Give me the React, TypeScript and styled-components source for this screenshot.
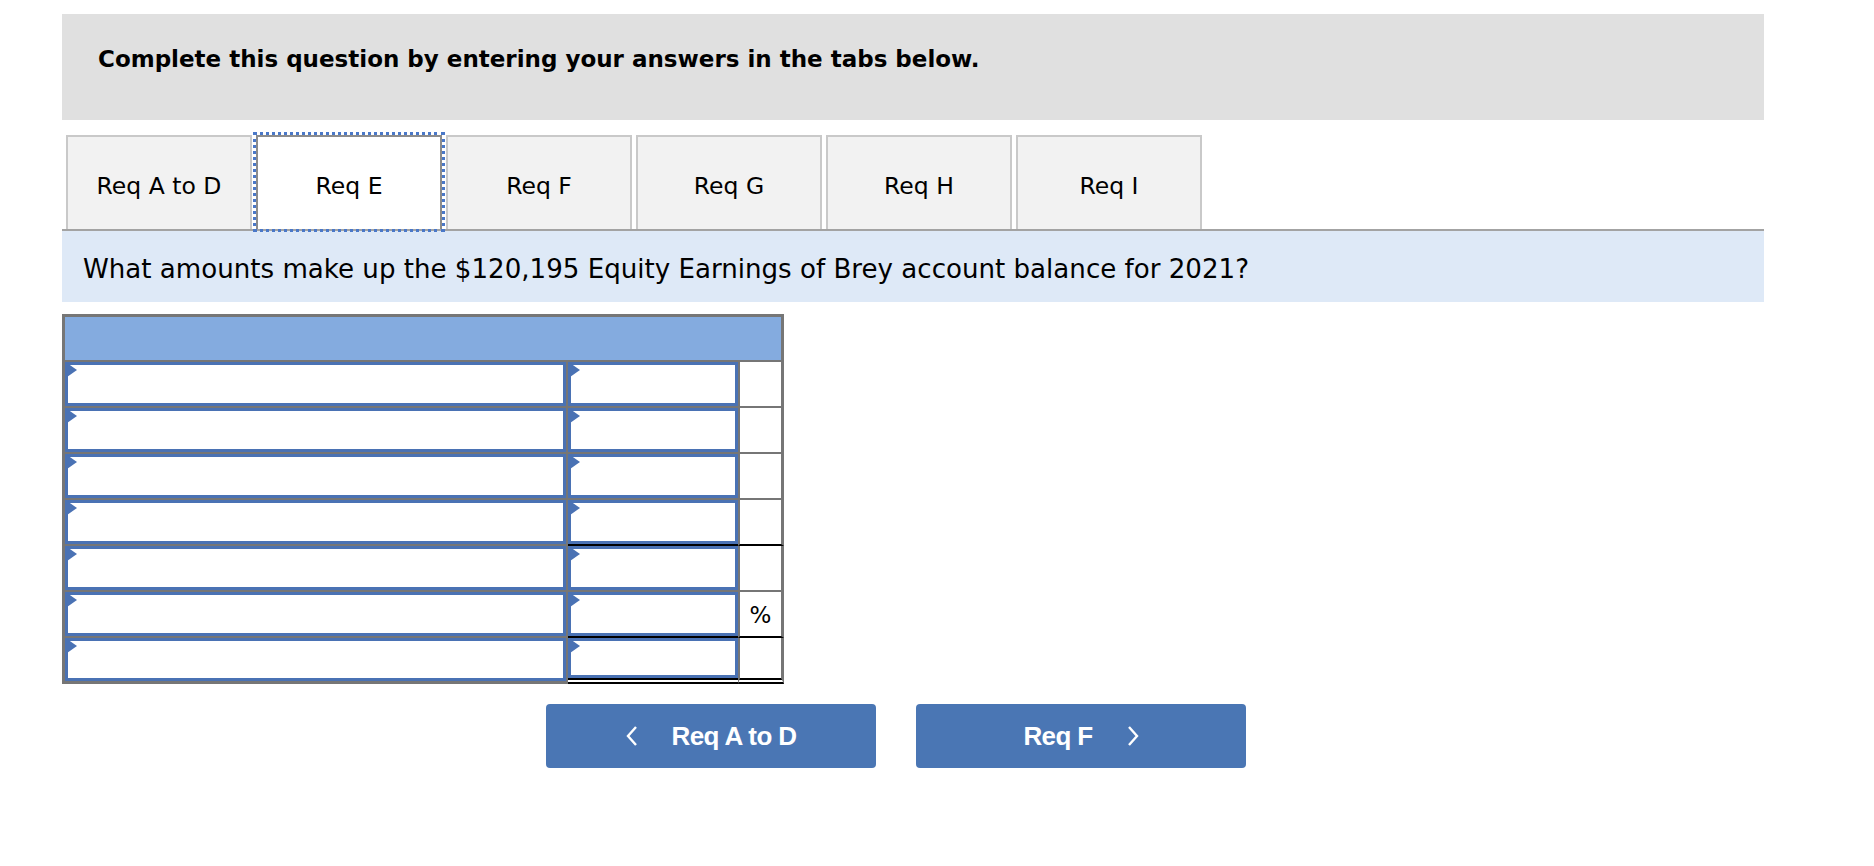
import styled, { createGlobalStyle } from "styled-components";

const GlobalStyle = createGlobalStyle`
  body {
    margin: 0;
    background: #fff;
    font-family: "DejaVu Sans", Verdana, sans-serif;
    color: #000;
  }
`;

const Page = styled.div`
  width: 1702px;
  padding: 14px 0 40px 62px;
`;

const Instructions = styled.div`
  background: #e0e0e0;
  height: 106px;
  box-sizing: border-box;
  padding: 32px 36px 0;
  font-size: 23px;
  font-weight: bold;
  line-height: normal;
`;

const TabBar = styled.div`
  display: flex;
  gap: 4px;
  margin-top: 15px;
  padding-left: 4px;
  border-bottom: 2px solid #a3a3a3;
`;

const Tab = styled.button<{ $active?: boolean }>`
  width: 186px;
  height: 94px;
  box-sizing: border-box;
  border: 2px solid ${(p) => (p.$active ? "#8c8c8c" : "#c9c9c9")};
  border-bottom: 0;
  background: ${(p) => (p.$active ? "#fff" : "#f2f2f2")};
  font-family: "DejaVu Sans", Verdana, sans-serif;
  font-size: 23.5px;
  color: #000;
  padding: 6px 0 0;
  cursor: pointer;
  outline: ${(p) => (p.$active ? "3px dotted #4a78c8" : "none")};
  outline-offset: 0;
`;

const Prompt = styled.div`
  background: #dee9f7;
  height: 71px;
  box-sizing: border-box;
  padding: 23px 21px 0;
  font-size: 26.1px;
  line-height: normal;
`;

const AnswerTable = styled.div`
  width: 722px;
  margin-top: 12px;
`;

const HeaderRow = styled.div`
  height: 48px;
  box-sizing: border-box;
  background: #84abdf;
  border: 3px solid #767676;
  border-bottom-width: 2px;
`;

const Row = styled.div`
  display: grid;
  grid-template-columns: 506px 170px 46px;
  height: 46px;
`;

type Rule = "none" | "single" | "double";

const NameCell = styled.div<{ $last?: boolean }>`
  box-sizing: border-box;
  border-left: 3px solid #767676;
  border-right: 2px solid #767676;
  border-bottom: ${(p) => (p.$last ? "3px" : "2px")} solid #767676;
  display: flex;
`;

const AmountCell = styled.div<{ $rule: Rule }>`
  box-sizing: border-box;
  display: flex;
  border-bottom: ${(p) =>
    p.$rule === "double"
      ? "6px double #000"
      : p.$rule === "single"
      ? "2px solid #000"
      : "2px solid #767676"};
`;

const UnitCell = styled(AmountCell)`
  border-left: 2px solid #767676;
  border-right: 3px solid #767676;
  align-items: center;
  justify-content: center;
  font-size: 23px;
  padding-top: 2px;
`;

const InputBox = styled.div`
  position: relative;
  flex: 1;
  border: 3px solid #4a72b4;
  background: #fff;
`;

const Field = styled.input`
  width: 100%;
  height: 100%;
  box-sizing: border-box;
  border: 0;
  padding: 0 14px;
  font-family: "DejaVu Sans", Verdana, sans-serif;
  font-size: 20px;
  background: transparent;
  outline: none;
`;

const Marker = styled.span`
  position: absolute;
  top: -2px;
  left: -1px;
  width: 0;
  height: 0;
  border-top: 7px solid transparent;
  border-bottom: 7px solid transparent;
  border-left: 10px solid #4a72b4;
`;

const NavRow = styled.div`
  display: flex;
  gap: 40px;
  margin-top: 20px;
  padding-left: 484px;
`;

const NavButton = styled.button`
  width: 330px;
  height: 64px;
  border: 0;
  border-radius: 4px;
  background: #4a76b4;
  color: #fff;
  font-family: "Liberation Sans", Arial, sans-serif;
  font-weight: bold;
  font-size: 26px;
  letter-spacing: -0.6px;
  display: flex;
  align-items: center;
  justify-content: center;
  gap: 34px;
  cursor: pointer;
`;

const Chevron = ({ dir }: { dir: "left" | "right" }) => (
  <svg width="12" height="22" viewBox="0 0 12 22">
    <polyline
      points={dir === "left" ? "10,2 2,11 10,20" : "2,2 10,11 2,20"}
      fill="none"
      stroke="#fff"
      strokeWidth="2.4"
    />
  </svg>
);

const tabs = ["Req A to D", "Req E", "Req F", "Req G", "Req H", "Req I"];

const rows: { rule: Rule; unit?: string }[] = [
  { rule: "none" },
  { rule: "none" },
  { rule: "none" },
  { rule: "single" },
  { rule: "none" },
  { rule: "single", unit: "%" },
  { rule: "double" },
];

export default function App() {
  return (
    <>
      <GlobalStyle />
      <Page>
        <Instructions>Complete this question by entering your answers in the tabs below.</Instructions>
        <TabBar>
          {tabs.map((t) => (
            <Tab key={t} $active={t === "Req E"}>
              {t}
            </Tab>
          ))}
        </TabBar>
        <Prompt>What amounts make up the $120,195 Equity Earnings of Brey account balance for 2021?</Prompt>
        <AnswerTable>
          <HeaderRow />
          {rows.map((r, i) => (
            <Row key={i}>
              <NameCell $last={i === rows.length - 1}>
                <InputBox>
                  <Marker />
                  <Field />
                </InputBox>
              </NameCell>
              <AmountCell $rule={r.rule}>
                <InputBox>
                  <Marker />
                  <Field />
                </InputBox>
              </AmountCell>
              <UnitCell $rule={r.rule}>{r.unit}</UnitCell>
            </Row>
          ))}
        </AnswerTable>
        <NavRow>
          <NavButton>
            <Chevron dir="left" />
            Req A to D
          </NavButton>
          <NavButton>
            Req F
            <Chevron dir="right" />
          </NavButton>
        </NavRow>
      </Page>
    </>
  );
}
